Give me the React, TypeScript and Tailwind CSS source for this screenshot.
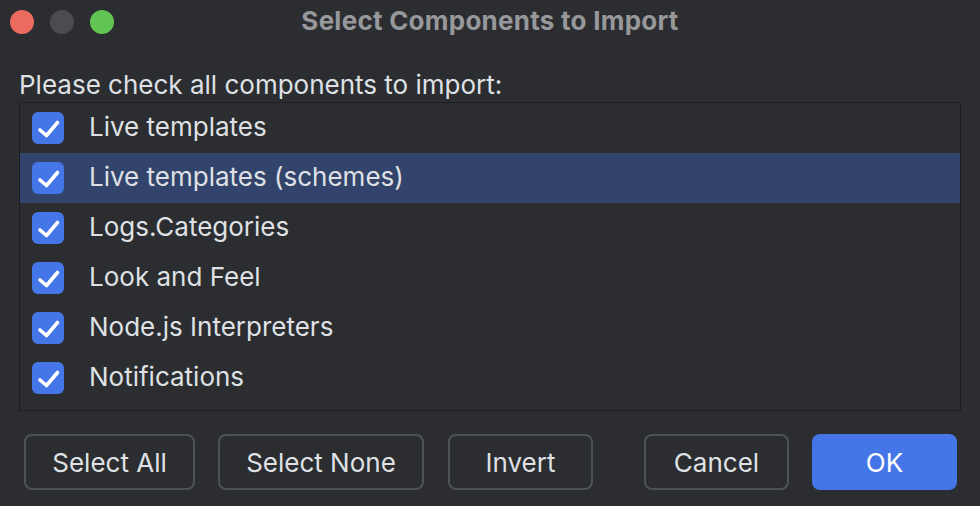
import React, { useState } from 'react';

const items = [
  'Live templates',
  'Live templates (schemes)',
  'Logs.Categories',
  'Look and Feel',
  'Node.js Interpreters',
  'Notifications',
];

const CheckBox: React.FC<{ checked: boolean }> = ({ checked }) => (
  <div
    className={`w-[32px] h-[32px] rounded-[6px] flex items-center justify-center ${
      checked ? 'bg-[#4476e8]' : 'border-2 border-[#6f737a]'
    }`}
  >
    {checked && (
      <svg width="32" height="32" viewBox="0 0 32 32" fill="none">
        <path
          d="M8 18l6.5 5.5L25.5 10.5"
          stroke="white"
          strokeWidth={3.6}
          strokeLinecap="round"
          strokeLinejoin="round"
        />
      </svg>
    )}
  </div>
);

const App: React.FC = () => {
  const [checked, setChecked] = useState<boolean[]>(items.map(() => true));
  const [selected, setSelected] = useState(1);

  const toggle = (i: number) => {
    setChecked(checked.map((c, idx) => (idx === i ? !c : c)));
  };

  return (
    <div className="w-[980px] h-[506px] bg-[#2b2d30] flex flex-col font-['Inter','Liberation_Sans',sans-serif] text-[#dfe1e5] overflow-hidden">
      {/* Title bar */}
      <div className="h-[43px] grid grid-cols-[1fr_auto_1fr] items-center">
        <div className="flex items-center gap-[16px] pl-[10px]">
          <span className="w-[24px] h-[24px] rounded-full bg-[#ed6a5e]"></span>
          <span className="w-[24px] h-[24px] rounded-full bg-[#4b4c4f]"></span>
          <span className="w-[24px] h-[24px] rounded-full bg-[#61c554]"></span>
        </div>
        <div className="text-[26px] font-bold text-[#97989b] tracking-[0.25px] pb-[2px]">
          Select Components to Import
        </div>
        <div></div>
      </div>

      {/* Label */}
      <div className="pl-[19px] mt-[25px] h-[34px] text-[26px] leading-[33px]">
        Please check all components to import:
      </div>

      {/* List */}
      <div className="mx-[19px] h-[309px] border border-[#1e1f22] flex flex-col">
        {items.map((item, i) => (
          <div
            key={item}
            onClick={() => {
              setSelected(i);
              toggle(i);
            }}
            className={`h-[50px] shrink-0 flex items-center pl-[12px] gap-[25px] cursor-default ${
              i === selected ? 'bg-[#33446c]' : ''
            }`}
          >
            <CheckBox checked={checked[i]} />
            <span className="text-[26px] pb-[3px]">{item}</span>
          </div>
        ))}
      </div>

      {/* Buttons */}
      <div className="flex items-center mt-[23px] pl-[24px] pr-[23px]">
        <button className="w-[171px] h-[56px] rounded-[8px] border-2 border-[#4e5157] text-[26px] text-[#dfe1e5]">
          Select All
        </button>
        <button className="ml-[23px] w-[206px] h-[56px] rounded-[8px] border-2 border-[#4e5157] text-[26px] text-[#dfe1e5]">
          Select None
        </button>
        <button className="ml-[24px] w-[145px] h-[56px] rounded-[8px] border-2 border-[#4e5157] text-[26px] text-[#dfe1e5]">
          Invert
        </button>
        <div className="flex-1"></div>
        <button className="w-[145px] h-[56px] rounded-[8px] border-2 border-[#4e5157] text-[26px] text-[#dfe1e5]">
          Cancel
        </button>
        <button className="ml-[23px] w-[145px] h-[56px] rounded-[8px] bg-[#4476e8] text-[26px] text-white">
          OK
        </button>
      </div>
    </div>
  );
};

export default App;
